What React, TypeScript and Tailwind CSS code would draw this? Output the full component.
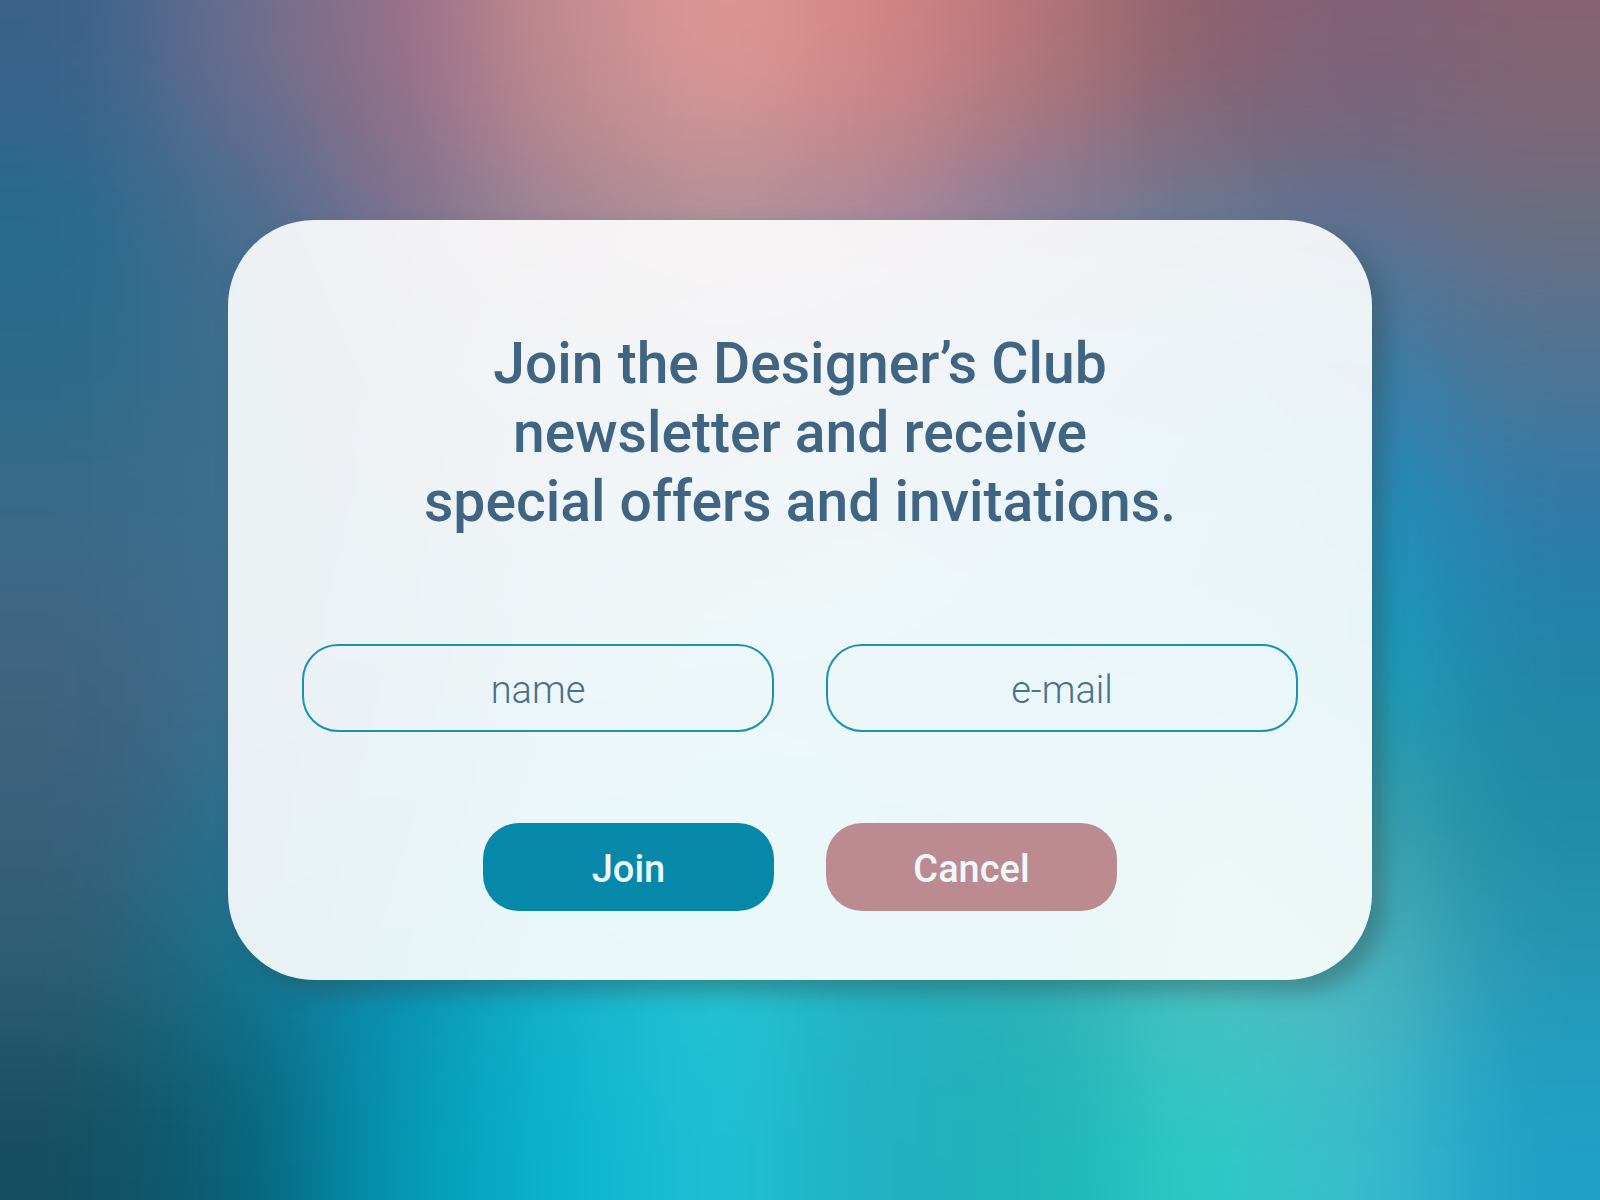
import { useState } from 'react'
import type { FormEvent } from 'react'

// colour cells of the backdrop, blurred together into one soft gradient
const backdrop = [
    ['#3a628b', '#6c6e8e', '#976f88', '#c48b90', '#de9894', '#d28684', '#b47478', '#8c626e', '#806078', '#846270'],
    ['#266b90', '#456d8f', '#7b7190', '#a08592', '#b08f9a', '#a8869a', '#807c9a', '#687894', '#5c708e', '#6a6e82'],
    ['#2f6a8a', '#3a6e8e', '#647a98', '#8090a2', '#8c98a8', '#8098b0', '#5e92b4', '#3c94bc', '#347eac', '#4c7494'],
    ['#386a88', '#3c6f90', '#4a7a9c', '#649ab0', '#70a4b8', '#66acbe', '#4aa4c8', '#3298cc', '#1e94c2', '#2c7cac'],
    ['#42647e', '#3c6d8e', '#3c849e', '#4ca0b4', '#50b0c4', '#4ab0c0', '#40acc4', '#30a8c8', '#18a0bc', '#2086a6'],
    ['#38607a', '#2a7090', '#2088ac', '#2aa8c4', '#2cbcc8', '#2cb4bc', '#34b0bc', '#48b4bc', '#3ca2ae', '#208ca4'],
    ['#2c5e70', '#14728c', '#0a92b6', '#14b4cc', '#24c4d4', '#24b0c0', '#2cb0b8', '#50c2c0', '#50b6c0', '#2698b4'],
    ['#154e60', '#086078', '#0498b4', '#0ab4d0', '#20c0d4', '#20b0c0', '#1eb4b8', '#2ccac6', '#3abccc', '#20a0c8'],
]

const fields = [
    { id: 'name', label: 'name', type: 'text' },
    { id: 'email', label: 'e-mail', type: 'email' },
]

function Backdrop() {
    const lastRow = backdrop.length - 1
    const lastCol = backdrop[0].length - 1

    return (
        <svg
            className="col-start-1 row-start-1 w-full h-full"
            viewBox="0 0 1600 1200"
            preserveAspectRatio="none"
            aria-hidden="true"
        >
            <defs>
                <filter
                    id="soften"
                    filterUnits="userSpaceOnUse"
                    x="-300"
                    y="-300"
                    width="2200"
                    height="1800"
                    colorInterpolationFilters="sRGB"
                >
                    <feGaussianBlur stdDeviation="62 72" />
                </filter>
            </defs>
            <g filter="url(#soften)" shapeRendering="crispEdges">
                {backdrop.map((row, r) =>
                    row.map((color, c) => {
                        // outer cells run past the edge so the blur stays opaque
                        const left = c === 0 ? -300 : c * 160
                        const top = r === 0 ? -300 : r * 150
                        const right = c === lastCol ? 1900 : (c + 1) * 160
                        const bottom = r === lastRow ? 1500 : (r + 1) * 150
                        return (
                            <rect
                                key={`${r}-${c}`}
                                x={left}
                                y={top}
                                width={right - left}
                                height={bottom - top}
                                fill={color}
                            />
                        )
                    })
                )}
            </g>
        </svg>
    )
}

export default function App() {
    const [values, setValues] = useState<Record<string, string>>({ name: '', email: '' })

    const handleSubmit = (e: FormEvent) => {
        e.preventDefault()
    }

    const handleCancel = () => setValues({ name: '', email: '' })

    return (
        <main className="grid grid-cols-1 min-h-screen overflow-hidden font-['Roboto',sans-serif]">
            <Backdrop />

            <div className="col-start-1 row-start-1 z-10 flex items-center justify-center p-6">
                <form
                    onSubmit={handleSubmit}
                    className="w-full max-w-[1144px] rounded-[86px] bg-white/90 px-8 md:px-[74px] pt-[109px] pb-[69px] shadow-[12px_12px_22px_rgba(50,70,70,0.4)]"
                >
                    <h1 className="text-center text-4xl md:text-[57px] md:leading-[69px] font-medium text-[#3f6583] [font-variant-ligatures:none]">
                        Join the Designer’s Club
                        <br />
                        newsletter and receive
                        <br />
                        special offers and invitations.
                    </h1>

                    {/* Fields */}
                    <div className="mt-[108px] grid grid-cols-1 md:grid-cols-2 gap-8 md:gap-[52px]">
                        {fields.map((field) => (
                            <input
                                key={field.id}
                                id={field.id}
                                type={field.type}
                                aria-label={field.label}
                                placeholder={field.label}
                                value={values[field.id]}
                                onChange={(e) => setValues({ ...values, [field.id]: e.target.value })}
                                className="h-[88px] w-full min-w-0 rounded-[36px] border-2 border-[#1a93b1] bg-transparent px-8 pt-1 text-center text-[38px] font-light text-[#4b6f8c] placeholder:text-[#4b6f8c] placeholder:opacity-100 outline-none focus:border-[#3f6583]"
                            />
                        ))}
                    </div>

                    {/* Actions */}
                    <div className="mt-[91px] flex flex-wrap justify-center gap-8 md:gap-[52px]">
                        <button
                            type="submit"
                            className="h-[88px] w-[291px] rounded-[36px] bg-[#0688a9] pt-1 text-[38px] font-medium text-[#eef8fa] hover:bg-[#057c9a] transition-colors"
                        >
                            Join
                        </button>
                        <button
                            type="button"
                            onClick={handleCancel}
                            className="h-[88px] w-[291px] rounded-[36px] bg-[#bb8b91] pt-1 text-[38px] font-medium text-[#eef8fa] hover:bg-[#ae7f85] transition-colors"
                        >
                            Cancel
                        </button>
                    </div>
                </form>
            </div>
        </main>
    )
}
